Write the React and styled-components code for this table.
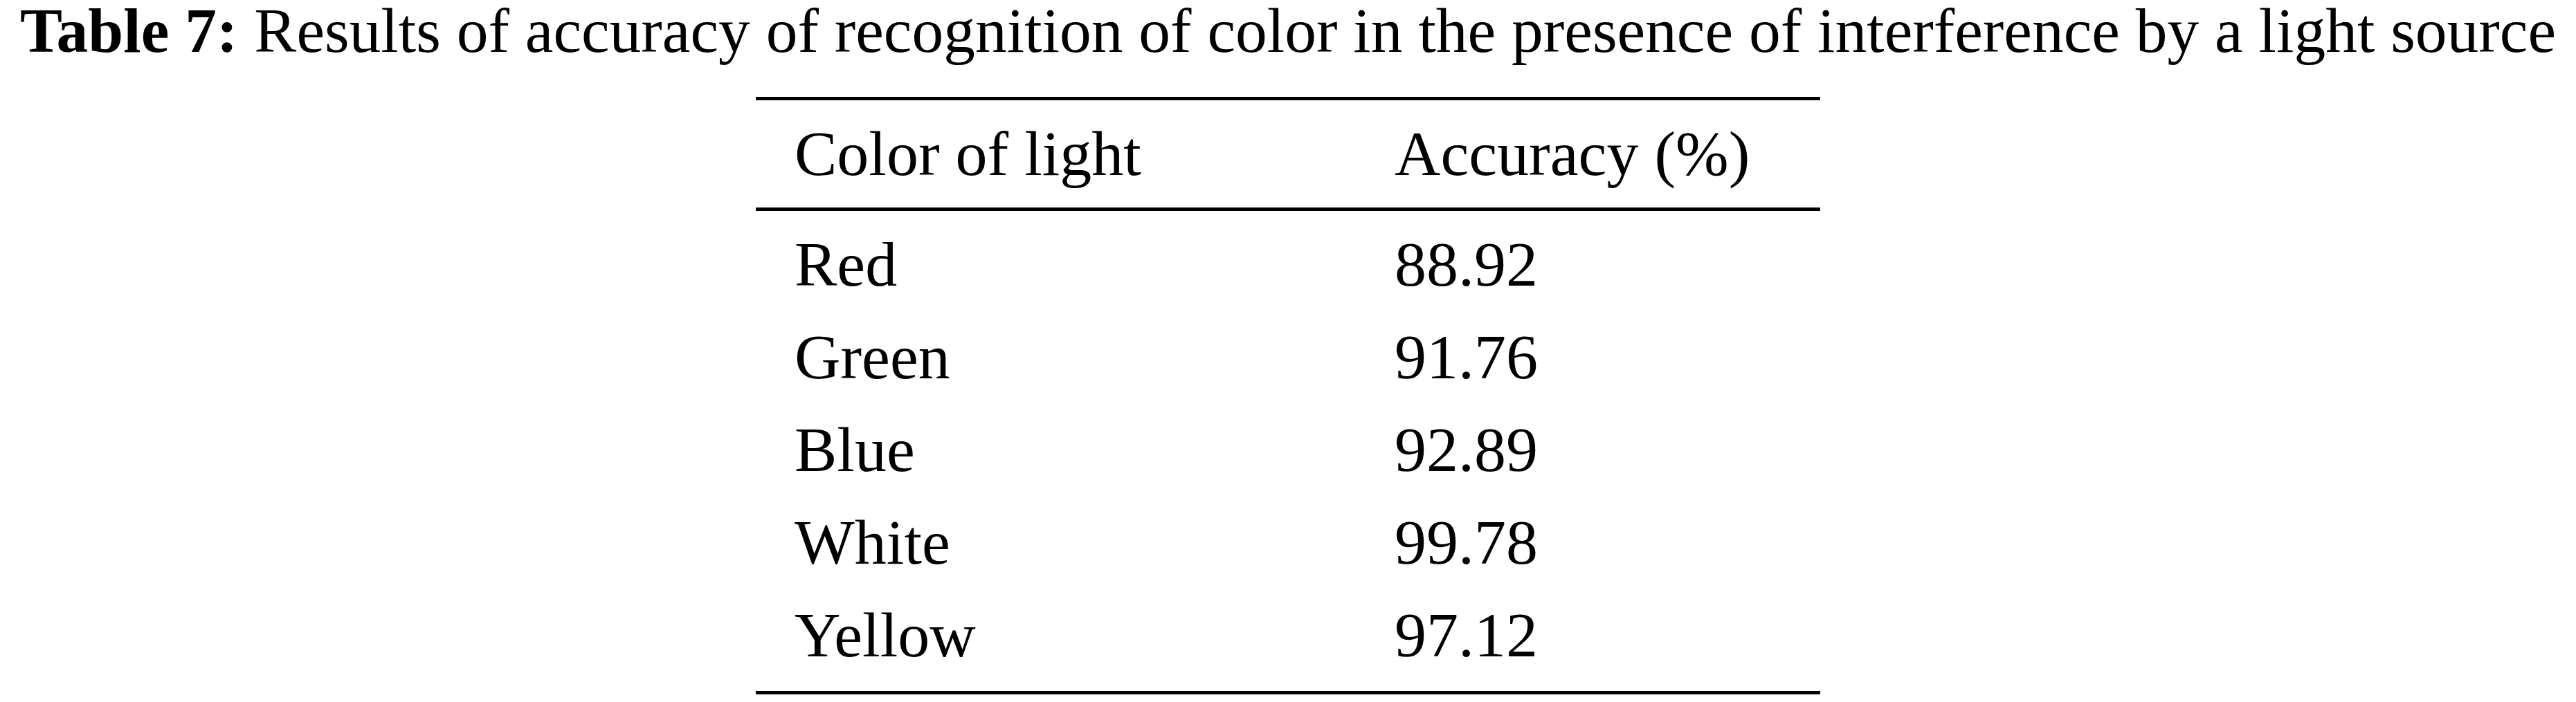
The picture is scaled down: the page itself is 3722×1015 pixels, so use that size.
import styled, { createGlobalStyle } from "styled-components";

const GlobalStyle = createGlobalStyle`
  html, body {
    margin: 0;
    padding: 0;
    background: #ffffff;
  }
  body {
    width: 3722px;
    height: 1015px;
    overflow: hidden;
    font-family: "Liberation Serif", "Times New Roman", serif;
    color: #000000;
  }
`;

const rows = [
  { color: "Red", accuracy: "88.92" },
  { color: "Green", accuracy: "91.76" },
  { color: "Blue", accuracy: "92.89" },
  { color: "White", accuracy: "99.78" },
  { color: "Yellow", accuracy: "97.12" },
];

export default function App() {
  return (
    <>
      <GlobalStyle />
      <Page>
        <Caption>
          <Label>Table 7:</Label>
          Results of accuracy of recognition of color in the presence of
          interference by a light source
        </Caption>
        <Table>
          <Head>
            <Cell>Color of light</Cell>
            <Cell>Accuracy (%)</Cell>
          </Head>
          <Body>
            {rows.map((r) => (
              <Row key={r.color}>
                <Cell>{r.color}</Cell>
                <Cell>{r.accuracy}</Cell>
              </Row>
            ))}
          </Body>
        </Table>
      </Page>
    </>
  );
}

const Page = styled.div`
  width: 3722px;
  height: 1015px;
  display: flex;
  flex-direction: column;
  align-items: center;
`;

const Caption = styled.div`
  font-size: 91.5px;
  line-height: 86px;
  padding-top: 1px;
  white-space: nowrap;
  text-align: center;
`;

const Label = styled.span`
  font-weight: bold;
  margin-right: 24px;
`;

const Table = styled.div`
  margin-top: 53px;
  width: 1538px;
  border-top: 5px solid #000;
  border-bottom: 5px solid #000;
  font-size: 92px;
  line-height: 134px;
`;

const Row = styled.div`
  display: grid;
  grid-template-columns: 867px 1fr;
  padding-left: 56px;
`;

const Head = styled(Row)`
  padding-top: 10px;
  padding-bottom: 11px;
  border-bottom: 5px solid #000;
`;

const Body = styled.div`
  padding: 10px 0 14px;
`;

const Cell = styled.div`
  white-space: nowrap;
`;
